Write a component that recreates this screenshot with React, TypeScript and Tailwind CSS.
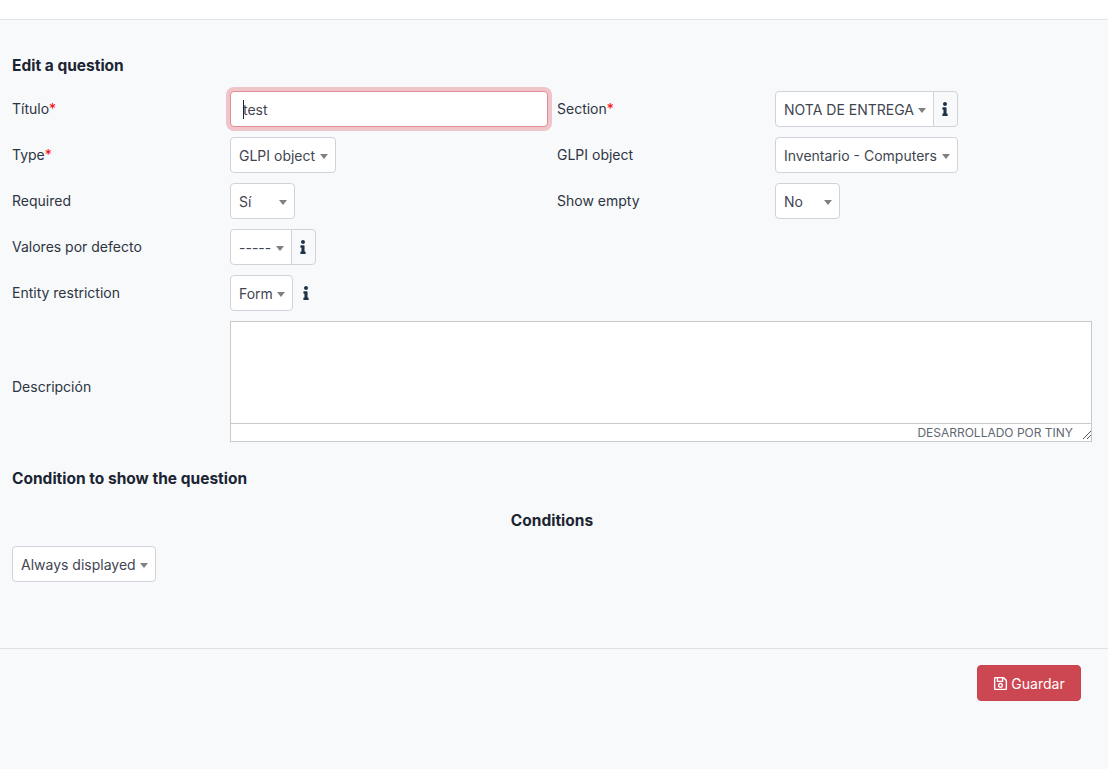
import React from 'react';
import { FaInfo, FaRegSave } from 'react-icons/fa';

const Req = () => <span className="text-[#ff0000]">*</span>;

const Caret = () => (
  <span className="ml-auto mt-[2px] h-0 w-0 shrink-0 border-x-[4px] border-t-[5px] border-x-transparent border-t-[#808080]" />
);

const Select: React.FC<{ value: string; width: string; attached?: boolean }> = ({ value, width, attached }) => (
  <div
    className={`flex h-9 shrink-0 items-center gap-1 border border-[#d0d3da] bg-white pl-2 pr-[7px] text-[#3f4651] ${width} ${
      attached ? 'rounded-l-[4px]' : 'rounded-[4px]'
    }`}
  >
    <span className="whitespace-nowrap">{value}</span>
    <Caret />
  </div>
);

const InfoAddon = () => (
  <div className="-ml-px flex h-9 w-[25px] items-center justify-center rounded-r-[4px] border border-[#d0d3da] bg-[#f8f9fb] pr-[2px]">
    <FaInfo className="text-[14px] text-[#1d3349]" />
  </div>
);

const Row: React.FC<{ label: React.ReactNode; children: React.ReactNode }> = ({ label, children }) => (
  <>
    <div className="flex h-9 items-center pb-px">{label}</div>
    <div className="flex h-9 items-center">{children}</div>
  </>
);

export default function App() {
  return (
    <div className="flex min-h-[769px] flex-col bg-[#f8f9fb] font-['Inter',sans-serif] text-[14px] text-[#2d3542]">
      <div className="h-5 border-b border-[#e2e4e8] bg-white" />

      <div className="px-3">
        <h2 className="mt-[36px] text-[15.5px] font-bold leading-5 text-[#1b2533]">Edit a question</h2>

        <div className="mt-[15px] grid grid-cols-[218px_327px_218px_1fr] gap-y-[10px]">
          <Row label={<span>Título<Req /></span>}>
            <div className="relative flex h-9 w-[318px] items-center rounded-[4px] border border-[#e28d97] bg-white pl-3 shadow-[0_0_0_4px_#f0c5ca]">
              <span className="absolute left-3 top-[8px] h-[19px] w-px bg-[#1b2533]" />
              <span className="text-[#3f4651]">test</span>
            </div>
          </Row>
          <Row label={<span>Section<Req /></span>}>
            <Select value="NOTA DE ENTREGA" width="w-[159px]" attached />
            <InfoAddon />
          </Row>

          <Row label={<span>Type<Req /></span>}>
            <Select value="GLPI object" width="w-[106px]" />
          </Row>
          <Row label="GLPI object">
            <Select value="Inventario - Computers" width="w-[183px]" />
          </Row>

          <Row label="Required">
            <Select value="Sí" width="w-[65px]" />
          </Row>
          <Row label="Show empty">
            <Select value="No" width="w-[65px]" />
          </Row>

          <Row label="Valores por defecto">
            <Select value="-----" width="w-[62px]" attached />
            <InfoAddon />
          </Row>
          <div className="col-span-2" />

          <Row label="Entity restriction">
            <Select value="Form" width="w-[63px]" />
            <FaInfo className="ml-[6px] text-[14px] text-[#1d3349]" />
          </Row>
          <div className="col-span-2" />

          <div className="flex items-center pt-[10px]">Descripción</div>
          <div className="col-span-3 flex h-[121px] w-[862px] flex-col border border-[#c9c9c9] bg-white">
            <div className="flex-1" />
            <div className="flex h-[18px] items-center justify-end border-t border-[#c9c9c9] pr-[18px] pt-px text-[12px] leading-none text-[#5f6771]">
              DESARROLLADO POR TINY
            </div>
          </div>
        </div>

        <div className="relative">
          <svg className="absolute right-[4px] top-[-12px]" width="10" height="10" viewBox="0 0 10 10" fill="none" stroke="#555">
            <path d="M1 9 9 1M5 9 9 5" />
          </svg>
        </div>

        <h2 className="mt-[27px] text-[15.5px] font-bold leading-5 text-[#1b2533]">Condition to show the question</h2>
        <div className="mt-[22px] pr-1 text-center text-[15.5px] font-bold leading-5 text-[#1b2533]">Conditions</div>
        <div className="mt-[15px] flex">
          <Select value="Always displayed" width="w-[144px]" />
        </div>
      </div>

      <div className="mt-[66px] flex justify-end border-t border-[#dfe1e5] pr-[27px] pt-4">
        <button className="flex h-9 w-[104px] items-center justify-center gap-[3px] rounded-[4px] border border-[#c9434f] bg-[#cd4752] text-white">
          <FaRegSave className="text-[15px]" />
          Guardar
        </button>
      </div>
    </div>
  );
}
